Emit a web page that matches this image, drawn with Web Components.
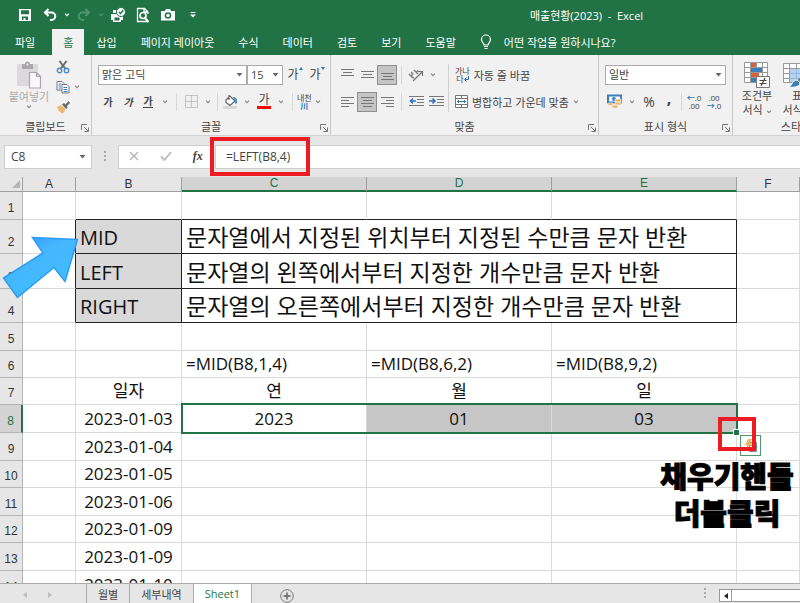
<!DOCTYPE html>
<html lang="ko">
<head>
<meta charset="utf-8">
<meta name="viewport" content="width=device-width, initial-scale=1">
<title>매출현황(2023) - Excel</title>
<style>
    html, body {
        height: 100%;
        margin: 0;
    }

    body {
        overflow: hidden;
        font-family: "Open Sans", "Noto Sans CJK KR", sans-serif;
        font-size: 11px;
        color: #444;
    }
</style>
</head>
<body>
<xl-app></xl-app>

<script>
    const ICONS = {
        save: [14, 14, '<path fill="#fff" fill-rule="evenodd" d="M1 1h12v12H1zM3 2.200v4h8v-4zM4 8.500v3.500h1.500v-2h2v2H10V8.500z"/>'],
        undo: [14, 14, '<path d="M5.500 1 2 4.500 5.500 8M2 4.500h6.500a3.700 3.700 0 0 1 0 7.500H7" fill="none" stroke="#fff" stroke-width="2"/>'],
        redo: [14, 14, '<path d="M8.500 1 12 4.500 8.500 8M12 4.500H5.500a3.700 3.700 0 0 0 0 7.500H7" fill="none" stroke="#4f9470" stroke-width="2"/>'],
        print: [16, 16, '<path fill="#fff" fill-rule="evenodd" d="M1 7h12v6h-2v2H3v-2H1zM4.500 10.500v3h5v-3zM3 3h4v3H3z"/><circle cx="11" cy="5" r="4.500" fill="#fff" stroke="#217346"/><path d="m9 5 1.500 1.700L13.300 3" fill="none" stroke="#217346" stroke-width="1.400"/>'],
        preview: [14, 16, '<path d="M12 14.500H1.500v-13h7L12 5v2M8 1.500V5h4" fill="none" stroke="#fff" stroke-width="1.300"/><circle cx="7" cy="8.500" r="3" fill="none" stroke="#fff" stroke-width="1.700"/><path d="m9 11 3.500 4" stroke="#fff" stroke-width="2"/>'],
        camera: [14, 14, '<path fill="#fff" fill-rule="evenodd" d="M0 3h4l1-2h4l1 2h4v9.500H0zM7 4.200a3.300 3.300 0 1 0 0 6.600 3.300 3.300 0 0 0 0-6.600m0 1.500a1.800 1.800 0 1 1 0 3.600 1.800 1.800 0 0 1 0-3.600"/>'],
        customize: [8, 8, '<path d="M1.500 1.500h5" stroke="#fff"/><path fill="#fff" d="M1 3.500h6l-3 3z"/>'],
        bulb: [12, 16, '<path d="M4 11C4 9 1.500 8.500 1.500 5.500a4.500 4.500 0 0 1 9 0C10.500 8.500 8 9 8 11z" fill="none" stroke="#fff" stroke-width="1.200"/><path d="M4 12.500h4M4.500 14.500h3" stroke="#fff" stroke-width="1.200"/>'],
        chevron: [6, 4, '<path d="m1 .7 2 2 2-2" fill="none" stroke="currentColor" stroke-width="1.100"/>'],
        paste: [26, 28, '<path fill="#dcd9dd" d="M1 3h21v22H1z"/><path fill="#aaa8ab" d="M6 3h3a2.500 2.500 0 0 1 5 0h3v5H6z"/><circle cx="11.500" cy="3.500" r="1" fill="#f1f1f1"/><path d="M13.500 11.500h7l4 4V27h-11zM20.500 11.500v4h4" fill="#fbf8fc" stroke="#aaa8ab" stroke-width="1.200"/>'],
        cut: [14, 14, '<path d="M3.500 1 9.500 9M10.500 1 4.500 9" stroke="#6a6a6a" stroke-width="2"/><circle cx="3.500" cy="10.500" r="2.200" fill="none" stroke="#4c8ac5" stroke-width="1.400"/><circle cx="10.500" cy="10.500" r="2.200" fill="none" stroke="#4c8ac5" stroke-width="1.400"/>'],
        copy: [14, 14, '<path d="M1 1.500h5l2 2V10H1z" fill="#fff" stroke="#777"/><path d="M6 4.500h5l2 2V13H6z" fill="#fff" stroke="#777"/><path d="M2.500 4h3M2.500 6h2.500M2.500 8h2.500M7.500 7.500H11M7.500 9.500h4M7.500 11.500h4" stroke="#3b7dbd"/>'],
        brush: [14, 14, '<path fill="#ebb96e" d="M1 7l4-2 4.500 4.500L7 13.500C4 13 2 10 1 7"/><path fill="#6a6a6a" d="m6 4.500 2-1.500 1.500 1.500L12.500 1 14 3l-3 3 .5 2-1.500 1z"/>'],
        launcher: [8, 8, '<path d="M.5 6V.5H6M3 3l4 4M7.500 3.500v4h-4" fill="none" stroke="#777"/>'],
        borders: [13, 13, '<path d="M.5.5h12v12H.5zM6.500.5v12M.5 6.500h12" fill="none" stroke="#999" stroke-dasharray="1 1"/>'],
        fill: [15, 15, '<path d="M6 1v5M3 6l4-4 5 5-5 4.500-4-3z" fill="#fff" stroke="#666" stroke-width="1.200"/><path fill="#4c8ac5" d="M10 3c3 0 4.500 2 4 6l-1.500 1z"/><path fill="#d8d8d8" d="M0 12h14v3H0z"/>'],
        top: [13, 13, '<path d="M0 1.500h13M2 4.500h9M0 7.500h13" stroke="#777"/>'],
        middle: [13, 13, '<path d="M0 3.500h13M2 6.500h9M0 9.500h13" stroke="#777"/>'],
        bottom: [13, 13, '<path d="M0 5.500h13M2 8.500h9M0 11.500h13" stroke="#777"/>'],
        left: [13, 13, '<path d="M0 2.500h13M0 5.500h8M0 8.500h13M0 11.500h8" stroke="#777"/>'],
        center: [13, 13, '<path d="M0 2.500h13M2 5.500h9M0 8.500h13M2 11.500h9" stroke="#777"/>'],
        right: [13, 13, '<path d="M0 2.500h13M5 5.500h8M0 8.500h13M5 11.500h8" stroke="#777"/>'],
        outdent: [15, 13, '<path d="M0 1.500h15M8 4.500h7M8 7.500h7M0 10.500h15" stroke="#777"/><path d="M7 6H2M4 3.500 1.500 6 4 8.500" fill="none" stroke="#2e75b6" stroke-width="1.600"/>'],
        indent: [15, 13, '<path d="M0 1.500h15M8 4.500h7M8 7.500h7M0 10.500h15" stroke="#777"/><path d="M0 6h5M3.500 3.500 6 6 3.500 8.500" fill="none" stroke="#2e75b6" stroke-width="1.600"/>'],
        orient: [16, 14, '<path d="m5 13 9-9M10 3.500h4.500V8M1 6l4 4M3 4l2 2-2 2M6 2l4 4M8 4.500l2-2M4 9l2 1" fill="none" stroke="#777" stroke-width="1.200"/>'],
        returnArrow: [5, 6, '<path d="M4.500 0v3.500H1M2.500 1.500l-2 2 2 2" fill="none" stroke="#2e75b6"/>'],
        merge: [13, 13, '<path d="M.5.5h12v12H.5zM.5 3.500h12M.5 9.500h12M6.500.5v3M6.500 9.500v3" fill="#fff" stroke="#777"/><path d="M2 6.500h9M4 5 2.500 6.500 4 8M9 5l1.500 1.500L9 8" fill="none" stroke="#2e75b6"/>'],
        currency: [16, 15, '<path d="M1 1.500h13v7H1z" fill="#fff" stroke="#3b7dbd" stroke-width="2"/><circle cx="7" cy="5" r="2" fill="#3b7dbd"/><path fill="#ebb96e" stroke="#f1f1f1" stroke-width=".6" d="M8 5h6v3H8zM8 8h6v3H8zM5 11h6v3H5zM1 9h5v2.500H1z"/>'],
        conditional: [26, 27, '<path d="M.5 1.500h23v20H.5zM6.500 1.500v20M12.500 1.500v20M18.500 1.500v20M.5 6.500h23M.5 11.500h23M.5 16.500h23" fill="#fff" stroke="#999"/><path fill="#d9603b" d="M7 2h5v4H7zM7 12h8v4H7z"/><path fill="#3b7dbd" d="M7 7h11v4H7zM7 17h5v4H7z"/><path fill="#fff" stroke="#777" d="M12.500 15.500h13v11h-13z"/><path d="M15.500 19.500h7M15.500 22.500h7M21 17l-4 8" stroke="#444" stroke-width="1.200"/>'],
        formatTable: [28, 27, '<path d="M.5 2.500h27v19H.5zM6.500 2.500v19M13.500 2.500v19M20.500 2.500v19M.5 7.500h27M.5 12.500h27M.5 17.500h27" fill="#fff" stroke="#999"/><path fill="#b9d3ec" d="M7 8h20v13H7z"/><path d="M13.500 8v13M20.500 8v13M7 12.500h20M7 17.500h20" stroke="#8db5db"/><path fill="#3b7dbd" stroke="#fff" d="M5 26c4 0 4-7 9-7l3 3c0 3-4 5-12 4"/><path d="m16 20 9-11" stroke="#777" stroke-width="3"/>'],
        cancel: [10, 10, '<path d="m1 1 8 8M9 1 1 9" stroke="#bbb" stroke-width="1.600"/>'],
        enter: [12, 10, '<path d="m1 5.500 3.500 3.500L11 1" fill="none" stroke="#bbb" stroke-width="1.800"/>'],
        caret: [7, 4, '<path fill="#666" d="M.5 0h6l-3 3.500z"/>'],
        grip: [3, 11, '<path fill="#aaa" d="M0 0h2v2H0zM0 4h2v2H0zM0 8h2v2H0z"/>'],
        corner: [8, 8, '<path fill="#b5b5b5" d="M8 0v8H0z"/>'],
        prev: [4, 6, '<path fill="#bdbdbd" d="M4 0v6L0 3z"/>'],
        next: [4, 6, '<path fill="#bdbdbd" d="M0 0v6l4-3z"/>'],
        scrollLeft: [4, 6, '<path fill="#222" d="M4 0v6L0 3z"/>'],
        add: [14, 14, '<circle cx="7" cy="7" r="6.300" fill="none" stroke="#777"/><path d="M7 3.500v7M3.500 7h7" stroke="#777" stroke-width="1.800"/>'],
        flash: [14, 14, '<path d="M5.500 3.500h7v9h-7zM5.500 6.500h7M5.500 9.500h7" fill="#fff" stroke="#888"/><path fill="#3b7dbd" d="M9 7h4v2H9z"/><path fill="#d9603b" d="M8 4h3v2H8z"/><path fill="#f0b65c" d="M4 0h4L5.500 4H8L2 11l1-5H1z"/>'],
        arrow: [80, 68, '<defs><linearGradient id="g" x1="0" y1="0" x2=".6" y2="1"><stop offset="0" stop-color="#2f93fa"/><stop offset=".4" stop-color="#45b6ff"/><stop offset="1" stop-color="#3fbdff"/></linearGradient></defs><path d="M32.500 4.500 77.500 6.500 65 48.500 54 34.500 17.500 64.500 3.500 45 43 20z" fill="url(#g)" stroke="#2c9cf5" stroke-width="1.500"/>']
    };

    // Shared base: puts the styles and the markup of a component in its shadow root
    class XlElement extends HTMLElement {
        constructor() {
            super();
            this.attachShadow({ mode: 'open' });
        }

        connectedCallback() {
            this.shadowRoot.innerHTML = `
                <style>
                    * { box-sizing: border-box; }
                    button, input, select { font: inherit; color: inherit; margin: 0; }
                    button { border: 0; padding: 0; background: none; }
                    ${this.styles()}
                </style>
                ${this.render()}
            `;
        }

        styles() { return ''; }
        render() { return '<slot></slot>'; }
    }

    class XlIcon extends XlElement {
        styles() {
            return `
                :host { display: inline-flex; flex: none; }
                svg { display: block; }
            `;
        }

        render() {
            const [w, h, body] = ICONS[this.getAttribute('name')];
            return `<svg width="${w}" height="${h}" viewBox="0 0 ${w} ${h}" aria-hidden="true">${body}</svg>`;
        }
    }

    class XlButton extends XlElement {
        styles() {
            return `
                :host { display: flex; flex: none; width: 20px; height: 20px; }
                :host([size="narrow"]) { width: 8px; }
                :host([size="drop"]) { width: 14px; }
                :host([size="wide"]) { width: 24px; }
                :host([size="auto"]) { width: auto; }
                button {
                    flex: 1;
                    display: flex;
                    align-items: center;
                    justify-content: center;
                    gap: 4px;
                    white-space: nowrap;
                }
                :host([pressed]) button { background: #c5c5c5; border: 1px solid #8f8f8f; }
            `;
        }

        render() {
            return `<button type="button" aria-label="${this.getAttribute('label') || ''}"><slot></slot></button>`;
        }
    }

    // Some buttons carry a visible caption, so they take their name from it
    class XlTextButton extends XlButton {
        render() {
            return '<button type="button"><slot></slot></button>';
        }
    }

    class XlTitleBar extends XlElement {
        styles() {
            return `
                :host {
                    display: flex;
                    align-items: center;
                    height: 29px;
                    padding-left: 13px;
                    background: #217346;
                    color: #fff;
                }
                .title { flex: 1; padding-left: 168px; text-align: center; white-space: nowrap; }
                .off { color: #4f9470; }
                .actions { display: flex; gap: 1px; }
            `;
        }

        render() {
            return `
                <div class="actions">
                    <xl-button size="wide" label="저장"><xl-icon name="save"></xl-icon></xl-button>
                    <xl-button size="wide" label="실행 취소"><xl-icon name="undo"></xl-icon></xl-button>
                    <xl-button size="narrow" label="취소 목록"><xl-icon name="chevron"></xl-icon></xl-button>
                    <xl-button size="wide" label="다시 실행"><xl-icon name="redo"></xl-icon></xl-button>
                    <xl-button size="narrow" label="다시 실행 목록" class="off"><xl-icon name="chevron"></xl-icon></xl-button>
                    <xl-button size="wide" label="빠른 인쇄"><xl-icon name="print"></xl-icon></xl-button>
                    <xl-button size="wide" label="인쇄 미리 보기"><xl-icon name="preview"></xl-icon></xl-button>
                    <xl-button size="wide" label="카메라"><xl-icon name="camera"></xl-icon></xl-button>
                    <xl-button size="wide" label="사용자 지정"><xl-icon name="customize"></xl-icon></xl-button>
                </div>
                <div class="title">매출현황(2023)&nbsp; -&nbsp; Excel</div>
            `;
        }
    }

    class XlTabs extends XlElement {
        styles() {
            return `
                :host {
                    display: flex;
                    height: 26px;
                    padding-left: 3px;
                    background: #217346;
                    color: #fff;
                }
                button { padding: 0 12px; white-space: nowrap; }
                button.active { margin-left: 5px; padding: 0 11px; background: #f1f1f1; color: #217346; }
                .tell { display: flex; align-items: center; gap: 12px; }
            `;
        }

        render() {
            const tabs = ['파일', '홈', '삽입', '페이지 레이아웃', '수식', '데이터', '검토', '보기', '도움말'];
            return tabs.map(tab => `
                <button type="button" class="${tab === '홈' ? 'active' : ''}">${tab}</button>
            `).join('') + `
                <button type="button" class="tell"><xl-icon name="bulb"></xl-icon>어떤 작업을 원하시나요?</button>
            `;
        }
    }

    class XlSelect extends XlElement {
        styles() {
            return `
                :host { display: grid; align-items: center; height: 20px; }
                select {
                    grid-area: 1 / 1;
                    width: 100%;
                    height: 20px;
                    padding: 0 3px;
                    border: 1px solid #ababab;
                    border-radius: 0;
                    background: #fff;
                    appearance: none;
                }
                xl-icon { grid-area: 1 / 1; justify-self: end; margin-right: 4px; pointer-events: none; }
            `;
        }

        render() {
            return `
                <select aria-label="${this.getAttribute('label')}"><option>${this.getAttribute('value')}</option></select>
                <xl-icon name="caret"></xl-icon>
            `;
        }
    }

    class XlGroup extends XlElement {
        styles() {
            return `
                :host {
                    display: flex;
                    flex: none;
                    flex-direction: column;
                    padding: 2px 2px 0 6px;
                    border-right: 1px solid #c8c8c8;
                }
                .body { display: flex; height: 62px; }
                .foot { display: grid; grid-template-columns: 1fr 8px; align-items: center; height: 16px; }
                .name { padding-left: 4px; text-align: center; line-height: 16px; white-space: nowrap; }
            `;
        }

        render() {
            return `
                <div class="body"><slot></slot></div>
                <div class="foot">
                    <span class="name">${this.getAttribute('name')}</span>
                    ${this.hasAttribute('plain') ? '' : '<button type="button" aria-label="옵션"><xl-icon name="launcher"></xl-icon></button>'}
                </div>
            `;
        }
    }

    class XlRibbon extends XlElement {
        styles() {
            return `
                :host {
                    display: flex;
                    height: 81px;
                    overflow: hidden;
                    background: #f1f1f1;
                    border-bottom: 1px solid #d2d2d2;
                }
                xl-icon[name="chevron"] { color: #888; }
                .rows { display: flex; flex-direction: column; padding-top: 4px; }
                .wide { flex: 1; }
                .row { display: flex; align-items: center; height: 27px; }
                .sep { flex: none; width: 1px; height: 18px; margin: 0 4px; background: #d8d8d8; }
                .tight { margin: 0 2px; }
                .tall { flex: none; width: 1px; height: 48px; margin: 7px 6px 0 2px; background: #d0d0d0; }
                .clip { width: 92px; }
                .font { width: 239px; }
                .align { width: 268px; }
                .number { width: 134px; }
                .number .rows { padding-right: 4px; }
                .style { width: 130px; padding-left: 2px; border: 0; }
                .family { width: 149px; }
                .size { width: 36px; }
                .paste, .big {
                    display: flex;
                    flex-direction: column;
                    align-items: center;
                    width: 44px;
                    padding-top: 4px;
                    white-space: nowrap;
                    line-height: 14px;
                }
                .paste { color: #aaa; gap: 1px; width: 46px; }
                .big { margin-right: -4px; line-height: 14px; gap: 1px; }
                .tools { display: flex; flex-direction: column; padding-left: 4px; }
                .tools div { display: flex; height: 20px; align-items: center; }
                .glyph { line-height: 14px; }
                .b { font-weight: 700; font-size: 10px; }
                .i { font-style: italic; }
                .u { border-bottom: 1px solid #444; line-height: 12px; }
                .up { display: flex; align-items: flex-start; font-size: 12px; line-height: 16px; }
                .mark { width: 0; height: 0; border: 2px solid transparent; }
                .up .mark { border-top: 0; border-bottom: 3px solid #2e75b6; }
                .down .mark { border-bottom: 0; border-top: 3px solid #2e75b6; }
                .color { border-bottom: 3px solid #f00; font-size: 12px; line-height: 12px; padding: 0 1px; }
                .stack { display: flex; flex-direction: column; align-items: center; font-size: 8px; line-height: 8px; }
                .stack div { display: flex; align-items: center; }
                .blue { color: #2e75b6; font-weight: 700; }
                .percent { font-size: 14px; }
                .comma { padding-bottom: 8px; font-size: 16px; font-weight: 700; line-height: 10px; }
            `;
        }

        render() {
            const drop = '<xl-button size="drop" label="목록"><xl-icon name="chevron"></xl-icon></xl-button>';
            return `
                <xl-group class="clip" name="클립보드">
                    <button type="button" class="paste"><xl-icon name="paste"></xl-icon>붙여넣기<xl-icon name="chevron"></xl-icon></button>
                    <div class="tools">
                        <div><xl-button label="잘라내기" size="drop"><xl-icon name="cut"></xl-icon></xl-button></div>
                        <div><xl-button label="복사" size="drop"><xl-icon name="copy"></xl-icon></xl-button>${drop}</div>
                        <div><xl-button label="서식 복사" size="drop"><xl-icon name="brush"></xl-icon></xl-button></div>
                    </div>
                </xl-group>

                <xl-group class="font" name="글꼴">
                    <div class="rows">
                        <div class="row">
                            <xl-select class="family" label="글꼴" value="맑은 고딕"></xl-select>
                            <xl-select class="size" label="글꼴 크기" value="15"></xl-select>
                            <xl-text-button size="wide"><span class="up">가<i class="mark"></i></span></xl-text-button>
                            <xl-text-button><span class="up down">가<i class="mark"></i></span></xl-text-button>
                        </div>
                        <div class="row">
                            <xl-text-button><span class="glyph b">가</span></xl-text-button>
                            <xl-text-button><span class="glyph b i">가</span></xl-text-button>
                            <xl-text-button><span class="glyph b u">가</span></xl-text-button>
                            ${drop}<span class="sep"></span>
                            <xl-button label="테두리"><xl-icon name="borders"></xl-icon></xl-button>${drop}
                            <span class="sep tight"></span>
                            <xl-button label="채우기 색"><xl-icon name="fill"></xl-icon></xl-button>${drop}
                            <xl-text-button><span class="color">가</span></xl-text-button>${drop}
                            <span class="sep"></span>
                            <xl-text-button size="drop"><span class="stack"><span>내천</span><span class="blue">川</span></span></xl-text-button>${drop}
                        </div>
                    </div>
                </xl-group>

                <xl-group class="align" name="맞춤">
                    <div class="rows">
                        <div class="row">
                            <xl-button label="위쪽 맞춤"><xl-icon name="top"></xl-icon></xl-button>
                            <xl-button label="가운데 맞춤"><xl-icon name="middle"></xl-icon></xl-button>
                            <xl-button label="아래쪽 맞춤" pressed><xl-icon name="bottom"></xl-icon></xl-button>
                            <span class="sep"></span>
                            <xl-button label="방향"><xl-icon name="orient"></xl-icon></xl-button>${drop}
                        </div>
                        <div class="row">
                            <xl-button label="왼쪽 맞춤"><xl-icon name="left"></xl-icon></xl-button>
                            <xl-button label="가운데 맞춤" pressed><xl-icon name="center"></xl-icon></xl-button>
                            <xl-button label="오른쪽 맞춤"><xl-icon name="right"></xl-icon></xl-button>
                            <span class="sep"></span>
                            <xl-button label="내어쓰기"><xl-icon name="outdent"></xl-icon></xl-button>
                            <xl-button label="들여쓰기"><xl-icon name="indent"></xl-icon></xl-button>
                        </div>
                    </div>
                    <span class="tall"></span>
                    <div class="rows">
                        <div class="row">
                            <xl-text-button size="auto">
                                <span class="stack"><span>가나</span><div>다<xl-icon name="returnArrow"></xl-icon></div></span>자동 줄 바꿈
                            </xl-text-button>
                        </div>
                        <div class="row">
                            <xl-text-button size="auto"><xl-icon name="merge"></xl-icon>병합하고 가운데 맞춤</xl-text-button>${drop}
                        </div>
                    </div>
                </xl-group>

                <xl-group class="number" name="표시 형식">
                    <div class="rows wide">
                        <div class="row"><xl-select class="wide" label="표시 형식" value="일반"></xl-select></div>
                        <div class="row">
                            <xl-button label="회계 표시 형식"><xl-icon name="currency"></xl-icon></xl-button>${drop}
                            <xl-text-button><span class="percent">%</span></xl-text-button>
                            <xl-text-button><span class="comma">,</span></xl-text-button>
                            <span class="sep tight"></span>
                            <xl-text-button><span class="stack"><span><span class="blue">←</span>.0</span><span>.00</span></span></xl-text-button>
                            <xl-text-button><span class="stack"><span>.00</span><span><span class="blue">→</span>.0</span></span></xl-text-button>
                        </div>
                    </div>
                </xl-group>

                <xl-group class="style" name="스타일" plain>
                    <button type="button" class="big">
                        <xl-icon name="conditional"></xl-icon><span>조건부<br>서식 <xl-icon name="chevron"></xl-icon></span>
                    </button>
                    <button type="button" class="big">
                        <xl-icon name="formatTable"></xl-icon><span>표<br>서식 <xl-icon name="chevron"></xl-icon></span>
                    </button>
                </xl-group>
            `;
        }
    }

    class XlFormulaBar extends XlElement {
        styles() {
            return `
                :host {
                    position: relative;
                    display: flex;
                    align-items: center;
                    height: 41px;
                    padding-left: 4px;
                    background: #e6e6e6;
                    font-size: 12px;
                }
                .name, .tools, .formula { height: 24px; background: #fff; border: 1px solid #cfcfcf; }
                .name { display: flex; align-items: center; width: 88px; padding-right: 5px; }
                .name input { width: 100%; min-width: 0; padding: 0 6px; }
                input { border: 0; outline: 0; background: none; }
                .grip { width: 26px; display: flex; justify-content: center; }
                .tools { display: flex; align-items: center; justify-content: space-around; width: 95px; border-right: 0; }
                .fx { font: italic 700 12px "Liberation Serif", serif; }
                .formula { flex: 1; border-right: 0; padding: 0 10px; margin-left: 2px; min-width: 0; }
                /* highlight round the formula text */
                .mark {
                    position: absolute;
                    left: 210px;
                    top: 1px;
                    width: 100px;
                    height: 39px;
                    border: 4px solid #ed1c24;
                    z-index: 2;
                    pointer-events: none;
                }
            `;
        }

        render() {
            return `
                <div class="name"><input value="C8" aria-label="이름 상자"><xl-icon name="caret"></xl-icon></div>
                <span class="grip"><xl-icon name="grip"></xl-icon></span>
                <div class="tools">
                    <button type="button" aria-label="취소"><xl-icon name="cancel"></xl-icon></button>
                    <button type="button" aria-label="입력"><xl-icon name="enter"></xl-icon></button>
                    <button type="button" class="fx">fx</button>
                </div>
                <input class="formula" value="=LEFT(B8,4)" aria-label="수식 입력줄">
                <div class="mark"></div>
            `;
        }
    }

    const ROWS = [
        { h: 28 },
        { h: 34, big: true, cells: ['', 'MID', '문자열에서 지정된 위치부터 지정된 수만큼 문자 반환'] },
        { h: 35, big: true, cells: ['', 'LEFT', '문자열의 왼쪽에서부터 지정한 개수만큼 문자 반환'] },
        { h: 34, big: true, cells: ['', 'RIGHT', '문자열의 오른쪽에서부터 지정한 개수만큼 문자 반환'] },
        { h: 28 },
        { h: 27, formula: true, cells: ['', '', '=MID(B8,1,4)', '=MID(B8,6,2)', '=MID(B8,9,2)'] },
        { h: 27, cells: ['', '일자', '연', '월', '일'] },
        { h: 28, cells: ['', '2023-01-03', '2023', '01', '03'] },
        { h: 28, cells: ['', '2023-01-04'] },
        { h: 27, cells: ['', '2023-01-05'] },
        { h: 28, cells: ['', '2023-01-06'] },
        { h: 27, cells: ['', '2023-01-09'] },
        { h: 28, cells: ['', '2023-01-09'] },
        { h: 28, cells: ['', '2023-01-10'] }
    ];

    class XlSheet extends XlElement {
        styles() {
            return `
                :host {
                    position: relative;
                    display: block;
                    flex: 1;
                    min-height: 0;
                    overflow: hidden;
                    background: #fff;
                    color: #111;
                    font-size: 17px;
                }
                table { width: 100%; min-width: 780px; table-layout: fixed; border-spacing: 0; }
                th {
                    padding: 0;
                    background: #e6e6e6;
                    font: 12px "Liberation Sans", sans-serif;
                    color: #333;
                    border: 0 solid #b5b5b5;
                    border-width: 0 1px 1px 0;
                }
                thead th { height: 15px; line-height: 14px; border-color: #9f9f9f; }
                thead th.on { background: #d3d3d3; color: #217346; border-bottom: 2px solid #217346; line-height: 13px; }
                tbody th { vertical-align: bottom; line-height: 22px; }
                tbody th.on { background: #d3d3d3; color: #217346; border-right: 2px solid #217346; }
                .corner { text-align: right; vertical-align: bottom; }
                .corner xl-icon { margin-right: 2px; }
                td {
                    position: relative;
                    padding: 0 4px;
                    vertical-align: bottom;
                    text-align: center;
                    line-height: 26px;
                    white-space: nowrap;
                    border: 0 solid #dadada;
                    border-width: 0 1px 1px 0;
                }
                .formula td { text-align: left; }
                .big td { text-align: left; font-size: 20px; line-height: 30px; }
                .big td:nth-child(n + 3) { border-color: #222; background: #d9d9d9; }
                .big td:nth-child(n + 4) { font-size: 23px; line-height: 32px; background: #fff; }
                .big td:nth-child(2) { border-right-color: #222; }
                .big td:last-child { border-color: #dadada; }
                tr:first-child td:nth-child(n + 3):nth-child(-n + 6) { border-bottom-color: #222; }
                .fill { background: #c6c6c6; }
                .selection {
                    position: absolute;
                    z-index: 1;
                    left: -1px;
                    top: -2px;
                    width: calc(300% + 5px);
                    height: calc(100% + 4px);
                    border: 2px solid #217346;
                    pointer-events: none;
                }
                .handle {
                    position: absolute;
                    right: -4px;
                    bottom: -4px;
                    width: 7px;
                    height: 7px;
                    background: #217346;
                    border: 1px solid #fff;
                }
                /* notes laid over the grid */
                .arrow { position: absolute; left: 0; top: 56px; z-index: 2; }
                .box {
                    position: absolute;
                    left: 718px;
                    top: 240px;
                    width: 38px;
                    height: 34px;
                    border: 4px solid #ed1c24;
                    z-index: 4;
                }
                .flash {
                    position: absolute;
                    left: 740px;
                    top: 258px;
                    width: 21px;
                    height: 21px;
                    background: #fff;
                    border: 1px solid #4c9a6e;
                    display: flex;
                    align-items: center;
                    justify-content: center;
                    z-index: 3;
                }
                .note {
                    position: absolute;
                    left: 657px;
                    top: 280px;
                    width: 140px;
                    margin: 0;
                    text-align: center;
                    white-space: nowrap;
                    font: 900 29px/37px "Noto Sans CJK KR", sans-serif;
                    color: #000;
                    -webkit-text-stroke: 1px #000;
                    z-index: 3;
                }
            `;
        }

        renderCell(row, number, i) {
            const text = row.cells?.[i] || '';
            if (row.big && i > 2 && i < 5) return '';
            const span = row.big && i === 2 ? ' colspan="3"' : '';
            const fill = number === 8 && (i === 3 || i === 4) ? ' class="fill"' : '';
            const selection = number === 8 && i === 2 ? '<div class="selection"><div class="handle"></div></div>' : '';
            return `<td${span}${fill}>${text}${selection}</td>`;
        }

        render() {
            const heads = ['A', 'B', 'C', 'D', 'E', 'F'];
            return `
                <table>
                    <colgroup>
                        <col style="width: 23px"><col style="width: 53px"><col style="width: 106px">
                        <col style="width: 185px"><col style="width: 185px"><col style="width: 185px"><col>
                    </colgroup>
                    <thead>
                        <tr>
                            <th class="corner"><xl-icon name="corner"></xl-icon></th>
                            ${heads.map(head => `<th class="${'CDE'.includes(head) ? 'on' : ''}">${head}</th>`).join('')}
                        </tr>
                    </thead>
                    <tbody>
                        ${ROWS.map((row, r) => `
                            <tr style="height: ${row.h}px" class="${row.big ? 'big' : ''}${row.formula ? 'formula' : ''}">
                                <th class="${r === 7 ? 'on' : ''}">${r + 1}</th>
                                ${heads.map((_, i) => this.renderCell(row, r + 1, i)).join('')}
                            </tr>
                        `).join('')}
                    </tbody>
                </table>
                <xl-icon class="arrow" name="arrow"></xl-icon>
                <button type="button" class="flash" aria-label="빠른 분석"><xl-icon name="flash"></xl-icon></button>
                <div class="box"></div>
                <p class="note">채우기핸들<br>더블클릭</p>
            `;
        }
    }

    class XlSheetBar extends XlElement {
        styles() {
            return `
                :host {
                    display: flex;
                    height: 20px;
                    background: #e6e6e6;
                    border-top: 1px solid #ababab;
                }
                .nav { display: flex; align-items: center; justify-content: space-between; width: 86px; padding: 0 34px 0 23px; }
                .tab { padding: 0 11px; border-left: 1px solid #ababab; white-space: nowrap; }
                .tab.active { background: #fff; color: #217346; border-right: 1px solid #ababab; }
                .add { display: flex; align-items: center; padding: 4px 28px 0; }
                .grip { margin-left: auto; display: flex; align-items: center; padding-right: 12px; }
                .scroll { display: flex; width: 81px; height: 13px; margin-top: 5px; border: 1px solid #999; border-right: 0; background: #fff; }
                .scroll button { display: flex; align-items: center; justify-content: center; width: 12px; border-right: 1px solid #999; }
            `;
        }

        render() {
            return `
                <div class="nav">
                    <button type="button" aria-label="이전"><xl-icon name="prev"></xl-icon></button>
                    <button type="button" aria-label="다음"><xl-icon name="next"></xl-icon></button>
                </div>
                <button type="button" class="tab">월별</button>
                <button type="button" class="tab">세부내역</button>
                <button type="button" class="tab active">Sheet1</button>
                <button type="button" class="add" aria-label="새 시트"><xl-icon name="add"></xl-icon></button>
                <span class="grip"><xl-icon name="grip"></xl-icon></span>
                <div class="scroll"><button type="button" aria-label="왼쪽"><xl-icon name="scrollLeft"></xl-icon></button></div>
            `;
        }
    }

    class XlApp extends XlElement {
        styles() {
            return ':host { display: flex; flex-direction: column; height: 100vh; }';
        }

        render() {
            return `
                <xl-title-bar></xl-title-bar>
                <xl-tabs></xl-tabs>
                <xl-ribbon></xl-ribbon>
                <xl-formula-bar></xl-formula-bar>
                <xl-sheet></xl-sheet>
                <xl-sheet-bar></xl-sheet-bar>
            `;
        }
    }

    customElements.define('xl-icon', XlIcon);
    customElements.define('xl-button', XlButton);
    customElements.define('xl-text-button', XlTextButton);
    customElements.define('xl-select', XlSelect);
    customElements.define('xl-group', XlGroup);
    customElements.define('xl-title-bar', XlTitleBar);
    customElements.define('xl-tabs', XlTabs);
    customElements.define('xl-ribbon', XlRibbon);
    customElements.define('xl-formula-bar', XlFormulaBar);
    customElements.define('xl-sheet', XlSheet);
    customElements.define('xl-sheet-bar', XlSheetBar);
    customElements.define('xl-app', XlApp);
</script>
</body>
</html>
